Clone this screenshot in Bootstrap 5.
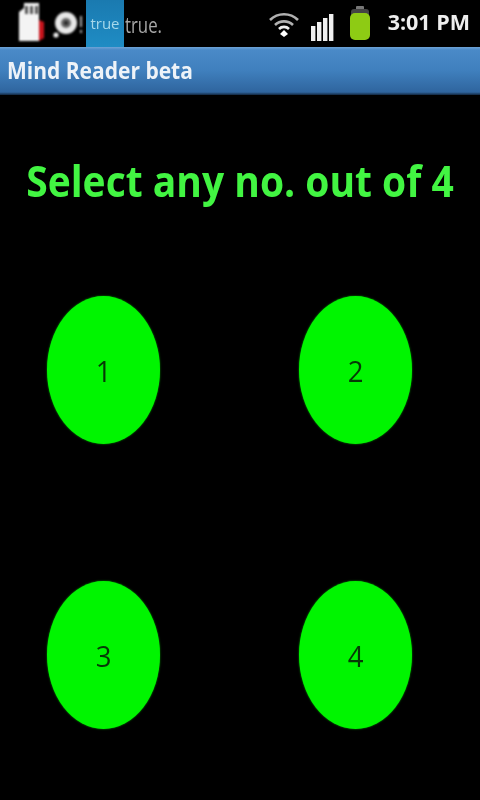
<!doctype html>
<html lang="en"><head><meta charset="utf-8"><title>Mind Reader beta</title>
<link href="https://cdn.jsdelivr.net/npm/bootstrap@5.3.0/dist/css/bootstrap.min.css" rel="stylesheet">
<style>
html,body{height:100%;background:#000;overflow:hidden}
body{font-family:"Open Sans","Noto Sans",sans-serif}
.stat-bar{height:47px;background:#000;padding-left:18px}
.sd-ico{width:27px;height:40px;margin-top:2px;filter:blur(.8px)}
.disc-ico{width:30px;height:30px;margin:10px 0 0 8px;filter:blur(.8px)}
.tile{width:38px;height:47px;margin-left:3px;background:linear-gradient(#1a7ab0,#1f8cc4);color:#a6d8ea;font-size:15px;font-weight:400;line-height:46px;text-align:center;filter:blur(.7px)}
.tile-text{color:#a8a8a8;font-size:21px;line-height:50px;margin-left:1px;filter:blur(.7px);transform:scaleX(.8);transform-origin:left}
.right-icons{margin-right:10px}
.wifi-ico{width:32px;height:28px;margin:9px 11px 0 0;filter:blur(.7px)}
.sig-ico{width:24px;height:28px;margin:13px 14px 0 0;filter:blur(.6px)}
.bat-ico{width:22px;height:34px;margin:6px 17px 0 0;filter:blur(.7px)}
.clock{color:#eee;font-weight:700;font-size:21.5px;line-height:44px;filter:blur(.7px)}
.title-bar{height:48px;background:linear-gradient(#6fa3d6 0,#4a8ac8 6%,#3f7fbd 50%,#2f659e 94%,#12263e 100%);color:#eef3f8;font-weight:700;font-size:21px;line-height:47px;padding-left:7px}
.title-bar span{display:inline-block;transform:scaleY(1.12);filter:blur(.6px)}
.pick-head{color:#42f542;font-weight:700;font-size:39px;line-height:54px;margin:59px 0 0;padding-bottom:1px;text-align:center;filter:blur(.6px);white-space:nowrap;transform:scaleY(1.1)}
.pick-grid{padding-left:47px;gap:139px}
.pick-row-a{margin-top:87px}
.pick-row-b{margin-top:137px}
.pick{width:113px;height:148px;padding:0;border:0;border-radius:50%;background:#00f500;color:#063806;font-size:30px;box-shadow:0 0 2px #0a0;display:flex;align-items:center;justify-content:center}
.pick span{display:block;filter:blur(.7px);transform:scaleX(.92)}
</style></head>
<body>
<div class="stat-bar d-flex justify-content-between">
 <div class="d-flex">
  <svg class="sd-ico" viewBox="0 0 27 40"><path d="M6 1h15v38H1V10l5-4z" fill="#f4f4f4"/><rect x="7" y="4" width="3" height="8" fill="#555"/><rect x="12" y="4" width="3" height="8" fill="#555"/><rect x="17" y="4" width="3" height="8" fill="#555"/><path d="M21 18l5 2v16l-5 3z" fill="#c8141c"/></svg>
  <svg class="disc-ico" viewBox="0 0 30 30"><circle cx="13" cy="13" r="11" fill="#e8e8e8"/><circle cx="13" cy="13" r="5" fill="#666"/><circle cx="13" cy="13" r="2" fill="#222"/><circle cx="3" cy="25" r="2.6" fill="#eee"/><rect x="27" y="6" width="2" height="11" fill="#aaa"/><rect x="27" y="20" width="2" height="3" fill="#aaa"/></svg>
  <div class="tile">true</div>
  <div class="tile-text">true.</div>
 </div>
 <div class="d-flex right-icons">
  <svg class="wifi-ico" viewBox="0 0 32 28"><g fill="none" stroke="#b0b0b0" stroke-width="2.6"><path d="M2 11a20 20 0 0 1 28 0"/><path d="M7 16a13 13 0 0 1 18 0"/></g><path d="M11 20a7 7 0 0 1 10 0" fill="none" stroke="#eee" stroke-width="2.6"/><path d="M16 21l4 4-4 3-4-3z" fill="#fff"/></svg>
  <svg class="sig-ico" viewBox="0 0 24 28"><rect x="0" y="13" width="4.4" height="15" fill="#f0f0f0"/><rect x="6" y="9" width="4.4" height="19" fill="#f0f0f0"/><rect x="12" y="5" width="4.4" height="23" fill="#f0f0f0"/><rect x="18" y="1" width="4.4" height="27" fill="#f0f0f0"/></svg>
  <svg class="bat-ico" viewBox="0 0 22 34"><rect x="7" y="0" width="8" height="4" rx="1" fill="#777"/><rect x="2" y="3" width="18" height="8" rx="3" fill="#444"/><rect x="1" y="7" width="20" height="27" rx="5" fill="#8ecb14"/></svg>
  <div class="clock">3:01 PM</div>
 </div>
</div>
<div class="title-bar"><span>Mind Reader beta</span></div>
<main>
 <h1 class="pick-head">Select any no. out of 4</h1>
 <div class="d-flex pick-grid pick-row-a">
  <button type="button" class="pick"><span>1</span></button>
  <button type="button" class="pick"><span>2</span></button>
 </div>
 <div class="d-flex pick-grid pick-row-b">
  <button type="button" class="pick"><span>3</span></button>
  <button type="button" class="pick"><span>4</span></button>
 </div>
</main>
<script src="https://cdn.jsdelivr.net/npm/bootstrap@5.3.0/dist/js/bootstrap.bundle.min.js"></script>
</body></html>
